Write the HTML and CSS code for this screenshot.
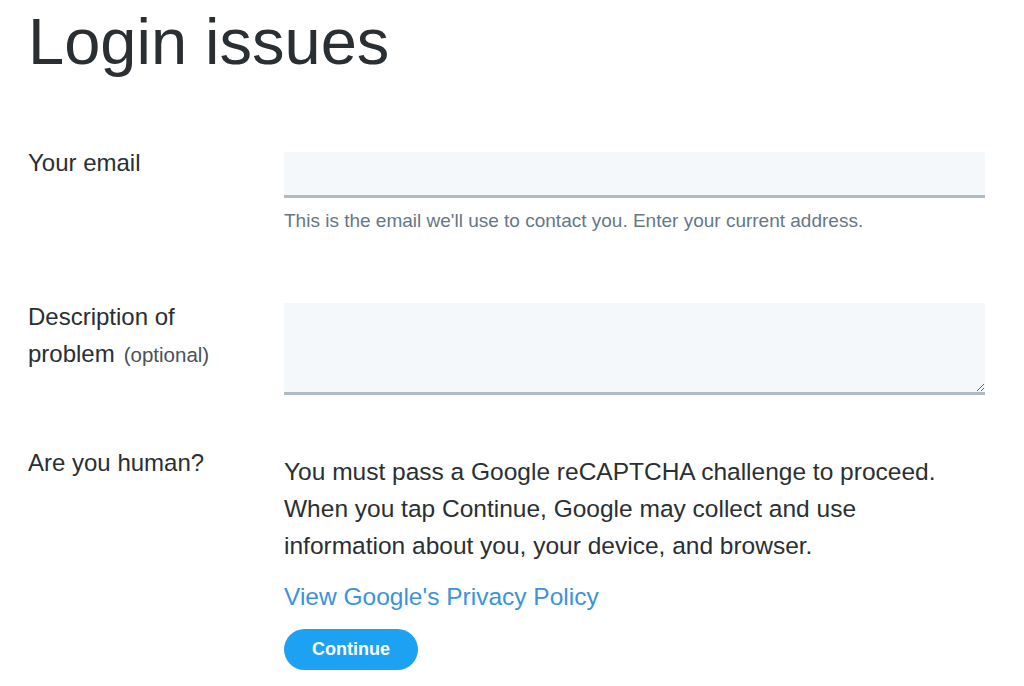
FILE: index.html
```html
<!DOCTYPE html>
<html lang="en">
<head>
    <meta charset="UTF-8">
    <meta name="viewport" content="width=device-width, initial-scale=1.0">
    <title>Login issues</title>
    <link rel="stylesheet" href="styles.css">
</head>
<body>
    <div class="container">
        <h1>Login issues</h1>

        <form class="login-form">
            <div class="form-row row-email">
                <label class="field-label" for="email">Your email</label>
                <div class="field">
                    <input type="email" id="email" class="text-input">
                    <p class="help">This is the email we'll use to contact you. Enter your current address.</p>
                </div>
            </div>

            <div class="form-row row-description">
                <label class="field-label" for="description"><span>Description of</span> <span>problem</span><span class="optional">(optional)</span></label>
                <div class="field">
                    <textarea id="description" class="text-input text-area"></textarea>
                </div>
            </div>

            <div class="form-row row-human">
                <div class="field-label">Are you human?</div>
                <div class="field">
                    <p class="captcha-text">You must pass a Google reCAPTCHA challenge to proceed. When you tap Continue, Google may collect and use information about you, your device, and browser.</p>
                    <a class="policy-link" href="#">View Google's Privacy Policy</a>
                    <div>
                        <button type="button" class="btn-primary">Continue</button>
                    </div>
                </div>
            </div>
        </form>
    </div>
</body>
</html>
```

FILE: styles.css
```css
body {
    font-family: "Liberation Sans", Arial, sans-serif;
    color: #292f33;
    background-color: #fff;
    margin: 0;
    padding: 0;
}
.container {
    padding: 0 39px 0 28px;
}
h1 {
    font-size: 65px;
    font-weight: normal;
    line-height: 1.15;
    margin: 5px 0 0;
}
.login-form {
    margin-top: 64px;
}
.form-row {
    display: flex;
    align-items: flex-start;
}
.field-label {
    width: 256px;
    box-sizing: border-box;
    padding-right: 40px;
    flex-shrink: 0;
    font-size: 24px;
    line-height: 37px;
}
.optional {
    display: inline-block;
    margin-left: 9px;
    font-size: 20.5px;
    line-height: 24px;
    color: #4a5157;
}
.field {
    flex: 1;
    padding-top: 8px;
}
.text-input {
    display: block;
    width: 100%;
    box-sizing: border-box;
    height: 46px;
    border: none;
    border-bottom: 3px solid #b0bcc4;
    background-color: #f5f8fa;
    font-family: inherit;
    font-size: 20px;
    padding: 8px 10px;
    margin: 0;
    outline: none;
}
.text-area {
    height: 92px;
}
.help {
    font-size: 19px;
    line-height: 25px;
    color: #657786;
    margin: 10px 0 0;
}
.row-description {
    margin-top: 65px;
}
.row-description .field {
    padding-top: 5px;
}
.row-human {
    margin-top: 49px;
}
.row-human .field {
    padding-top: 9px;
}
.captcha-text {
    max-width: 665px;
    font-size: 24.5px;
    line-height: 37px;
    margin: 0;
}
.policy-link {
    display: inline-block;
    margin-top: 14px;
    font-size: 24.5px;
    line-height: 37px;
    color: #3b94d9;
    text-decoration: none;
}
.btn-primary {
    margin-top: 14px;
    height: 41px;
    padding: 0 28px;
    border: none;
    border-radius: 21px;
    background-color: #1da1f2;
    color: #fff;
    font-family: inherit;
    font-size: 18px;
    font-weight: bold;
    cursor: pointer;
}
```
